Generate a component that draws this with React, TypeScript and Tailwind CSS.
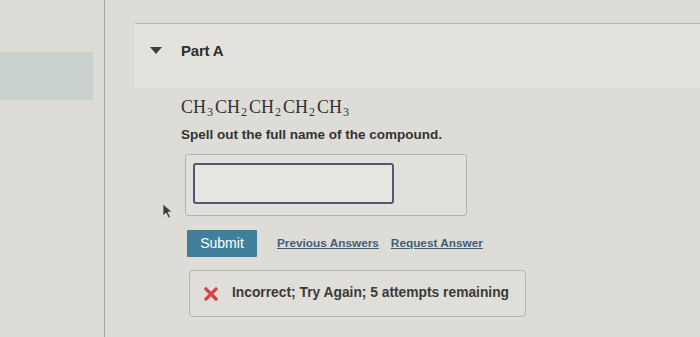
import React from "react";

const Sub: React.FC<{ n: string }> = ({ n }) => (
  <span className="relative top-[3px] text-[12px] leading-none ml-[1px] mr-[2px]">{n}</span>
);

const App: React.FC = () => {
  return (
    <div
      className="w-[700px] h-[337px] flex bg-[#dedcd6] overflow-hidden text-[#2e2e2e]"
      style={{ fontFamily: '"Liberation Sans", Arial, sans-serif' }}
    >
      {/* left rail */}
      <div className="w-[105px] shrink-0 border-r border-[#a9a7a2] bg-[#dddbd6] pt-[52px]">
        <div className="w-[93px] h-[48px] bg-[#c9d2ce]" />
      </div>

      {/* main */}
      <div className="flex-1 pt-[23px] pl-[30px] relative">
        <div className="border-t border-[#b9b7b2] bg-[#e4e2dd] h-[65px] flex items-start pt-[17px]">
          <svg width="12" height="7" viewBox="0 0 12 7" className="ml-[15px] mt-[6px]">
            <polygon points="0,0 12,0 6,7" fill="#3d3d3d" />
          </svg>
          <span className="ml-[19px] text-[15px] font-bold text-[#2f2f2f] leading-[20px] tracking-[-0.2px]">Part A</span>
        </div>

        <div className="pl-[46px] pt-[8px]">
          <div
            className="text-[18px] leading-[22px] text-[#333]"
            style={{ fontFamily: '"Liberation Serif", "Times New Roman", serif' }}
          >
            CH<Sub n="3" />CH<Sub n="2" />CH<Sub n="2" />CH<Sub n="2" />CH<Sub n="3" />
          </div>
          <p className="mt-[8px] text-[13.5px] font-bold leading-[18px] text-[#333]">
            Spell out the full name of the compound.
          </p>

          <div className="mt-[10px] ml-[4px] w-[282px] h-[62px] border border-[#b4b2ac] rounded-[3px] bg-[#e2e0da] pt-[8px] pl-[7px]">
            <div className="w-[201px] h-[41px] border-2 border-[#4e5878] rounded-[3px] bg-[#e8e6e1]" />
          </div>

          <div className="mt-[14px] ml-[6px] flex items-center">
            <button className="w-[70px] h-[27px] bg-[#3f7f99] text-white text-[14px] rounded-[1px]">
              Submit
            </button>
            <a className="ml-[20px] text-[11.8px] font-semibold underline text-[#3f5f78]">Previous Answers</a>
            <a className="ml-[12px] text-[11.8px] font-semibold underline text-[#3f5f78]">Request Answer</a>
          </div>

          <div className="mt-[13px] ml-[8px] w-[337px] h-[47px] border border-[#b6b4ae] rounded-[4px] bg-[#e0ded8] flex items-center pl-[14px]">
            <svg width="14" height="14" viewBox="0 0 14 14">
              <path d="M2 2 L12 12 M12 2 L2 12" stroke="#d2434f" strokeWidth="3.2" strokeLinecap="square" />
            </svg>
            <span className="ml-[14px] text-[13.8px] font-bold text-[#3a3a3a]">
              Incorrect; Try Again; 5 attempts remaining
            </span>
          </div>
        </div>

        {/* mouse cursor */}
        <svg width="12" height="16" viewBox="0 0 12 16" className="absolute left-[57px] top-[203px]">
          <path d="M1 1 L1 13 L4 10 L6.5 15 L8.5 14 L6 9 L10 9 Z" fill="#3a3a3a" stroke="#dcdad4" strokeWidth="0.8" />
        </svg>
      </div>
    </div>
  );
};

export default App;
